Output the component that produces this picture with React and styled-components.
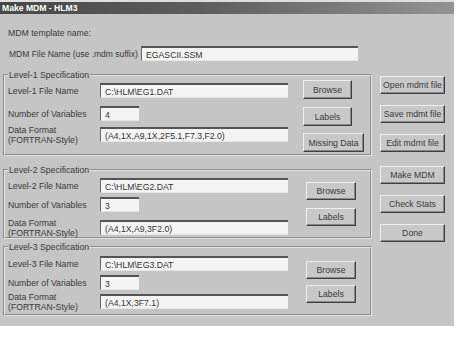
import React from 'react';
import styled, { createGlobalStyle } from 'styled-components';

// ─────────────────────────────────────────────────────────────────────────────
// data
// ─────────────────────────────────────────────────────────────────────────────

const levels = [
  {
    n: 1,
    file: 'C:\\HLM\\EG1.DAT',
    vars: '4',
    fmt: '(A4,1X,A9,1X,2F5.1,F7.3,F2.0)',
    top: 9,
    gaps: [3, 8, 6],
    pb: 2,
    bl: 15,
    buttons: [
      { t: 'Browse', m: 0, h: 19, w: 49 },
      { t: 'Labels', m: 8, h: 19, w: 49 },
      { t: 'Missing Data', m: 7, h: 19, w: 61 },
    ],
  },
  {
    n: 2,
    file: 'C:\\HLM\\EG2.DAT',
    vars: '3',
    fmt: '(A4,1X,A9,3F2.0)',
    top: 9,
    gaps: [3, 4, 8],
    pb: 2,
    bl: 18,
    buttons: [
      { t: 'Browse', m: 7, h: 18, w: 50 },
      { t: 'Labels', m: 8, h: 18, w: 50 },
    ],
  },
  {
    n: 3,
    file: 'C:\\HLM\\EG3.DAT',
    vars: '3',
    fmt: '(A4,1X,3F7.1)',
    top: 3,
    gaps: [4, 4, 4],
    pb: 5,
    bl: 18,
    buttons: [
      { t: 'Browse', m: 9, h: 18, w: 50 },
      { t: 'Labels', m: 6, h: 18, w: 50 },
    ],
  },
];

const sideButtons = ['Open mdmt file', 'Save mdmt file', 'Edit mdmt file', 'Make MDM', 'Check Stats', 'Done'];

// ─────────────────────────────────────────────────────────────────────────────
// frame
// ─────────────────────────────────────────────────────────────────────────────

const Global = createGlobalStyle`
  html, body {
    margin: 0;
    background: #fff;
  }
  body {
    font-family: "Liberation Sans", Arial, sans-serif;
  }
`;

const Dialog = styled.div`
  width: 454px;
  height: 326px;
  box-sizing: border-box;
  border-top: 2px solid #dedede;
  background: #c5c5c5;
  color: #3a3a3a;
  font-size: 8.7px;
`;

const TitleBar = styled.div`
  height: 12px;
  padding-left: 2px;
  background: linear-gradient(90deg, #474747 0%, #5e5e5e 45%, #939393 100%);
  color: #fff;
  font-weight: bold;
  font-size: 8.6px;
  line-height: 12px;
`;

const Body = styled.div`
  display: flex;
  padding-left: 3px;
`;

const Main = styled.div`
  width: 369px;
  display: flex;
  flex-direction: column;
`;

const Side = styled.div`
  margin-left: 8px;
  padding-top: 62px;
  display: flex;
  flex-direction: column;
  gap: 11px;
`;

// ─────────────────────────────────────────────────────────────────────────────
// controls
// ─────────────────────────────────────────────────────────────────────────────

const Caption = styled.div`
  margin-top: 13px;
  padding-left: 5px;
  line-height: 12px;
`;

const Row = styled.div`
  display: flex;
  align-items: center;
  height: 15px;
  margin-top: ${(p) => p.$mt}px;
  padding-left: ${(p) => p.$pl || 0}px;
`;

const Label = styled.div`
  width: ${(p) => p.$w}px;
  flex: none;
  padding-left: 1px;
  box-sizing: border-box;
  line-height: 10px;
  white-space: nowrap;
  font-size: ${(p) => p.$fs || 8.7}px;
`;

const Input = styled.input`
  box-sizing: border-box;
  width: ${(p) => p.$w}px;
  height: 15px;
  margin: 0;
  padding: 1px 0 0 4px;
  border: none;
  border-top: 2px solid #555;
  border-left: 1px solid #666;
  border-bottom: 1px solid #e6e6e6;
  background: #f4f4f4;
  color: #333;
  font-family: "Liberation Sans", Arial, sans-serif;
  font-size: 8.7px;
  outline: none;
`;

const Button = styled.button`
  box-sizing: border-box;
  width: ${(p) => p.$w}px;
  height: ${(p) => p.$h}px;
  margin: ${(p) => p.$mt || 0}px 0 0;
  padding: 0;
  border: 1px solid;
  border-color: #efefef #3f3f3f #3f3f3f #efefef;
  box-shadow: inset -1px -1px 0 #888;
  background: #c8c8c8;
  color: #3a3a3a;
  font-family: "Liberation Sans", Arial, sans-serif;
  font-size: 8.7px;
  white-space: nowrap;
`;

// ─────────────────────────────────────────────────────────────────────────────
// group box
// ─────────────────────────────────────────────────────────────────────────────

const Group = styled.fieldset`
  box-sizing: border-box;
  width: 369px;
  margin: ${(p) => p.$mt}px 0 0;
  padding: 0 2px ${(p) => p.$pb}px;
  border: 2px groove #e2e2e2;
`;

const Legend = styled.legend`
  margin-left: 1px;
  padding: 0 1px;
  line-height: 10px;
  font-size: 8.7px;
`;

const Inner = styled.div`
  display: flex;
`;

const Fields = styled.div`
  display: flex;
  flex-direction: column;
`;

const Buttons = styled.div`
  margin-left: ${(p) => p.$ml}px;
  display: flex;
  flex-direction: column;
`;

function Level({ l }) {
  return (
    <Group $mt={l.top} $pb={l.pb}>
      <Legend>Level-{l.n} Specification</Legend>
      <Inner>
        <Fields>
          <Row $mt={l.gaps[0]}>
            <Label $w={93}>Level-{l.n} File Name</Label>
            <Input $w={188} readOnly value={l.file} />
          </Row>
          <Row $mt={l.gaps[1]}>
            <Label $w={93}>Number of Variables</Label>
            <Input $w={39} readOnly value={l.vars} />
          </Row>
          <Row $mt={l.gaps[2]}>
            <Label $w={93}>
              Data Format
              <br />
              (FORTRAN-Style)
            </Label>
            <Input $w={188} readOnly value={l.fmt} />
          </Row>
        </Fields>
        <Buttons $ml={l.bl}>
          {l.buttons.map((b) => (
            <Button key={b.t} $w={b.w} $h={b.h} $mt={b.m}>
              {b.t}
            </Button>
          ))}
        </Buttons>
      </Inner>
    </Group>
  );
}

// ─────────────────────────────────────────────────────────────────────────────
// app
// ─────────────────────────────────────────────────────────────────────────────

export default function App() {
  return (
    <>
      <Global />
      <Dialog>
        <TitleBar>Make MDM - HLM3</TitleBar>
        <Body>
          <Main>
            <Caption>MDM template name:</Caption>
            <Row $mt={7} $pl={5}>
              <Label $w={133} $fs={8.5}>MDM File Name (use .mdm suffix)</Label>
              <Input $w={217} readOnly value="EGASCII.SSM" />
            </Row>
            {levels.map((l) => (
              <Level key={l.n} l={l} />
            ))}
          </Main>
          <Side>
            {sideButtons.map((t) => (
              <Button key={t} $w={65} $h={18} $mt={t === 'Make MDM' ? 3 : 0}>
                {t}
              </Button>
            ))}
          </Side>
        </Body>
      </Dialog>
    </>
  );
}
